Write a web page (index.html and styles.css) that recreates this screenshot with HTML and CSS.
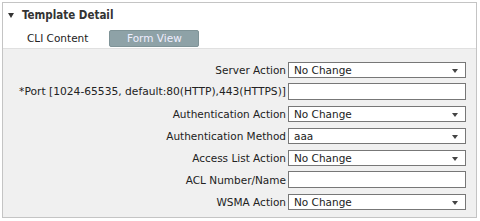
FILE: index.html
```html
<!DOCTYPE html>
<html>
<head>
<meta charset="utf-8">
<link rel="stylesheet" href="styles.css">
</head>
<body>
<div class="panel">
  <div class="head">
    <div class="title"><span class="tri"></span>Template Detail</div>
    <div class="tabs">
      <span class="tab">CLI Content</span>
      <span class="tab active">Form View</span>
    </div>
  </div>
  <div class="form">
    <div class="row"><label>Server Action</label><div class="sel">No Change<span class="arr"></span></div></div>
    <div class="row"><label class="long">*Port [1024-65535, default:80(HTTP),443(HTTPS)]</label><div class="inp"></div></div>
    <div class="row"><label>Authentication Action</label><div class="sel">No Change<span class="arr"></span></div></div>
    <div class="row"><label>Authentication Method</label><div class="sel">aaa<span class="arr"></span></div></div>
    <div class="row"><label>Access List Action</label><div class="sel">No Change<span class="arr"></span></div></div>
    <div class="row"><label>ACL Number/Name</label><div class="inp"></div></div>
    <div class="row"><label>WSMA Action</label><div class="sel">No Change<span class="arr"></span></div></div>
  </div>
</div>
</body>
</html>
```

FILE: styles.css
```css
html, body { margin: 0; padding: 0; background: #fff; }
body { font-family: "DejaVu Sans", Verdana, sans-serif; font-size: 10px; color: #222; padding: 2px 2px 0 2px; }
.panel { width: 475px; height: 216px; border: 1px solid #c4c4c4; background: #f0f0f0; box-sizing: border-box; }
.head { background: #fff; height: 46px; border-bottom: 1px solid #e0e0e0; box-sizing: border-box; }
.title { display: flex; align-items: center; height: 22px; padding-left: 5px; padding-top: 1px; font-family: "DejaVu Sans Condensed", "DejaVu Sans", sans-serif; font-weight: bold; font-size: 11.5px; color: #333; }
.tri { width: 0; height: 0; border-left: 3.5px solid transparent; border-right: 3.5px solid transparent; border-top: 5px solid #333; margin-right: 8px; }
.tabs { display: flex; align-items: center; padding-left: 24px; gap: 21px; height: 18px; margin-top: 3px; }
.tab { font-size: 10.5px; color: #222; }
.tab.active { background: #8ea2a7; color: #eef; width: 90px; height: 17px; display: flex; align-items: center; justify-content: center; border-radius: 2px; border: 1px solid #7f9397; box-sizing: border-box; }
.form { padding-top: 13px; display: flex; flex-direction: column; gap: 7px; }
.row { display: flex; align-items: center; justify-content: flex-end; padding-right: 10px; height: 15px; }
.row label { margin-right: 2px; font-size: 10.5px; }
.row label.long { font-size: 10.7px; }
.sel, .inp { width: 178px; height: 16px; box-sizing: border-box; border: 1px solid #777; background: #fff; display: flex; align-items: center; padding-left: 5px; position: relative; font-size: 10.5px; }
.inp { height: 17px; }
.arr { position: absolute; right: 7px; top: 6px; width: 0; height: 0; border-left: 3px solid transparent; border-right: 3px solid transparent; border-top: 4px solid #444; }
```
